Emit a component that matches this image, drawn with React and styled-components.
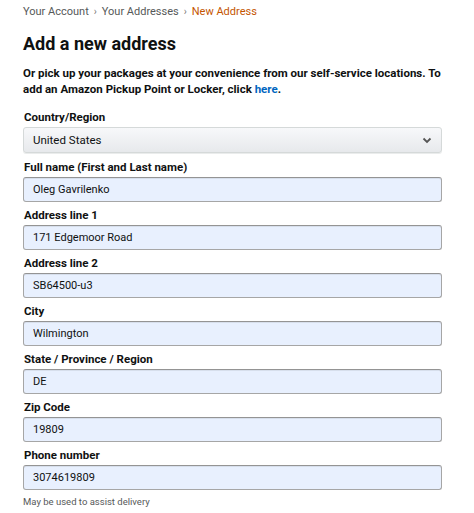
import styled, { createGlobalStyle } from 'styled-components'

const GlobalStyle = createGlobalStyle`
  body {
    margin: 0;
    background: #fff;
    font-family: Roboto, 'Open Sans', Arial, sans-serif;
    color: #0f1111;
  }
`

const Page = styled.div`
  width: 419px;
  padding: 4px 0 0 23px;
`

const Breadcrumb = styled.nav`
  display: flex;
  align-items: center;
  gap: 5px;
  font-size: 11px;
  line-height: 16px;
  color: #565959;
`

const Crumb = styled.span`
  color: ${(props) => (props.$current ? '#c45500' : '#565959')};
`

const Sep = styled.span`
  font-size: 10px;
  color: #767676;
`

const Title = styled.h1`
  margin: 12px 0 0;
  font-size: 18px;
  line-height: 24px;
  font-weight: 700;
`

const Intro = styled.p`
  max-width: 418px;
  margin: 9px 0 0;
  font-size: 11.5px;
  line-height: 16px;
  font-weight: 700;
`

const Link = styled.a`
  color: #0066c0;
  text-decoration: none;
`

const Form = styled.form`
  display: flex;
  flex-direction: column;
  margin-top: 12px;
`

const Field = styled.div`
  display: flex;
  flex-direction: column;
  gap: 2px;
  margin-bottom: ${(props) => (props.$wide ? '6px' : '5px')};
`

const Label = styled.label`
  padding-left: 1px;
  font-size: 11.5px;
  line-height: 16px;
  font-weight: 700;
`

const Input = styled.input`
  box-sizing: border-box;
  width: 100%;
  height: 25px;
  padding: 0 9px;
  border: 1px solid #a6a6a6;
  border-top-color: #949494;
  border-radius: 3px;
  background: #e8f0fe;
  box-shadow: 0 1px 0 rgba(255, 255, 255, 0.5), 0 1px 0 rgba(0, 0, 0, 0.07) inset;
  font-family: inherit;
  font-size: 11px;
  color: #0f1111;
  outline: none;
`

const Select = styled.div`
  box-sizing: border-box;
  display: flex;
  align-items: center;
  justify-content: space-between;
  height: 26px;
  padding: 0 9px;
  border: 1px solid #d5d9d9;
  border-radius: 3px;
  background: linear-gradient(#f7f8fa, #e7e9ec);
  box-shadow: 0 1px 0 rgba(213, 217, 217, 0.5);
  font-size: 11.5px;
  color: #0f1111;
`

const Hint = styled.div`
  font-size: 9.5px;
  line-height: 14px;
  color: #565959;
`

const fields = [
  { label: 'Full name (First and Last name)', value: 'Oleg Gavrilenko' },
  { label: 'Address line 1', value: '171 Edgemoor Road' },
  { label: 'Address line 2', value: 'SB64500-u3' },
  { label: 'City', value: 'Wilmington' },
  { label: 'State / Province / Region', value: 'DE' },
  { label: 'Zip Code', value: '19809' },
  { label: 'Phone number', value: '3074619809' },
]

export default function App() {
  return (
    <Page>
      <GlobalStyle />
      <Breadcrumb>
        <Crumb>Your Account</Crumb>
        <Sep>›</Sep>
        <Crumb>Your Addresses</Crumb>
        <Sep>›</Sep>
        <Crumb $current>New Address</Crumb>
      </Breadcrumb>
      <Title>Add a new address</Title>
      <Intro>
        Or pick up your packages at your convenience from our self-service locations. To add an Amazon
        Pickup Point or Locker, click <Link href='#'>here</Link>.
      </Intro>
      <Form>
        <Field $wide>
          <Label>Country/Region</Label>
          <Select>
            United States
            <svg width='10' height='7' viewBox='0 0 10 7'>
              <path d='M1.5 1.5 L5 5 L8.5 1.5' fill='none' stroke='#555' strokeWidth='1.8' />
            </svg>
          </Select>
        </Field>
        {fields.map((f) => (
          <Field key={f.label}>
            <Label>{f.label}</Label>
            <Input defaultValue={f.value} />
          </Field>
        ))}
        <Hint>May be used to assist delivery</Hint>
      </Form>
    </Page>
  )
}
